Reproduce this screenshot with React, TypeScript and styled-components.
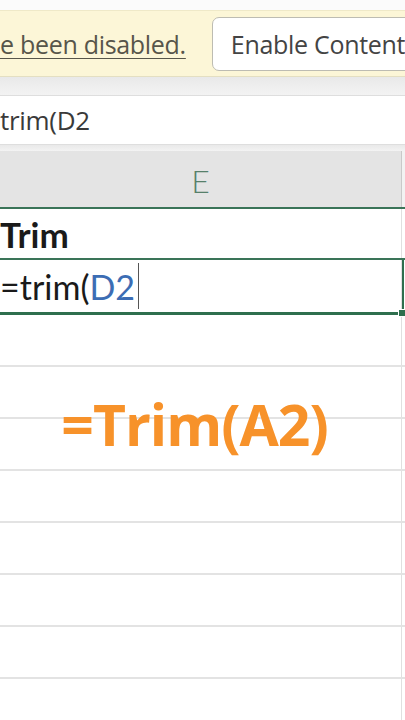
import styled, { createGlobalStyle } from 'styled-components';

const GlobalStyle = createGlobalStyle`
  html, body {
    margin: 0;
    padding: 0;
    background: #ffffff;
    overflow: hidden;
  }
`;

const App = () => {
  const emptyRows = [0, 1, 2, 3, 4, 5, 6, 7];
  return (
    <>
      <GlobalStyle />
      <Page>
        <TopStrip />
        <MessageBar>
          <MessageText>e been disabled.</MessageText>
          <EnableButton>Enable Content</EnableButton>
        </MessageBar>
        <Gap $height={18} />
        <FormulaBar>trim(D2</FormulaBar>
        <Gap $height={6} />
        <ColumnHeader>
          <HeaderCell>E</HeaderCell>
        </ColumnHeader>
        <Row $height={51} $green>
          <Cell $bold>Trim</Cell>
        </Row>
        <ActiveRow>
          <Cell>
            =trim(<Ref>D2</Ref>
            <Caret />
          </Cell>
          <FillHandle />
        </ActiveRow>
        {emptyRows.map((r) => (
          <Row key={r} $height={52}>
            <Cell />
          </Row>
        ))}
        <Caption>=Trim(A2)</Caption>
      </Page>
    </>
  );
};

export default App;

const Page = styled.div`
  position: relative;
  width: 405px;
  height: 720px;
  overflow: hidden;
  display: flex;
  flex-direction: column;
  background: #ffffff;
`;

const TopStrip = styled.div`
  flex: none;
  height: 10px;
  background: #fbfbfb;
`;

const MessageBar = styled.div`
  flex: none;
  height: 67px;
  box-sizing: border-box;
  display: flex;
  align-items: center;
  gap: 26px;
  background: #fcf6d7;
  border-top: 1px solid #efe9c8;
  border-bottom: 1px solid #e4dfc2;
  white-space: nowrap;
`;

const MessageText = styled.span`
  font-family: 'Open Sans', 'Noto Sans', sans-serif;
  font-size: 25px;
  letter-spacing: -0.3px;
  color: #57554a;
  text-decoration: underline;
  text-underline-offset: 4px;
  text-decoration-thickness: 1px;
`;

const EnableButton = styled.div`
  flex: none;
  width: 230px;
  height: 54px;
  box-sizing: border-box;
  display: flex;
  align-items: center;
  padding-left: 18px;
  background: #ffffff;
  border: 1px solid #bdbcb2;
  border-radius: 7px;
  font-family: 'Open Sans', 'Noto Sans', sans-serif;
  font-size: 25px;
  letter-spacing: -0.3px;
  color: #444444;
`;

const Gap = styled.div<{ $height: number }>`
  flex: none;
  height: ${({ $height }) => $height}px;
  background: linear-gradient(#e9e9e9, #f3f3f3);
`;

const FormulaBar = styled.div`
  flex: none;
  height: 50px;
  box-sizing: border-box;
  display: flex;
  align-items: center;
  background: #ffffff;
  border-top: 1px solid #dedede;
  border-bottom: 1px solid #dedede;
  font-family: 'Open Sans', 'Noto Sans', sans-serif;
  font-size: 26px;
  letter-spacing: -0.3px;
  color: #3a3a3a;
`;

const ColumnHeader = styled.div`
  flex: none;
  height: 58px;
  box-sizing: border-box;
  display: flex;
  background: #f2f2f2;
  border-bottom: 2px solid #3a7458;
`;

const HeaderCell = styled.div`
  width: 402px;
  box-sizing: border-box;
  display: flex;
  align-items: center;
  justify-content: center;
  padding-top: 2px;
  background: #e4e4e4;
  border-right: 1px solid #c9c9c9;
  font-family: 'Lato', 'Open Sans', sans-serif;
  font-size: 32px;
  font-weight: 300;
  color: #56806a;
`;

const Row = styled.div<{ $height: number; $green?: boolean }>`
  flex: none;
  height: ${({ $height }) => $height}px;
  box-sizing: border-box;
  display: flex;
  border-bottom: ${({ $green }) => ($green ? '2px solid #3a7458' : '2px solid #e3e3e3')};
`;

const ActiveRow = styled.div`
  position: relative;
  flex: none;
  width: 404px;
  height: 55px;
  box-sizing: border-box;
  display: flex;
  border-right: 2px solid #2f6f4e;
  border-bottom: 3px solid #2f6f4e;
`;

const Cell = styled.div<{ $bold?: boolean }>`
  width: 402px;
  box-sizing: border-box;
  display: flex;
  align-items: center;
  border-right: 1px solid #e0e0e0;
  font-family: 'Lato', 'Open Sans', sans-serif;
  font-size: ${({ $bold }) => ($bold ? 35 : 34)}px;
  font-weight: ${({ $bold }) => ($bold ? 700 : 400)};
  color: #1a1a1a;
  white-space: nowrap;
`;

const Ref = styled.span`
  color: #3c6db4;
`;

const Caret = styled.span`
  display: inline-block;
  width: 1px;
  height: 46px;
  margin-left: 3px;
  background: #555555;
`;

const FillHandle = styled.div`
  position: absolute;
  right: -4px;
  bottom: -5px;
  width: 6px;
  height: 6px;
  background: #2f6f4e;
  border: 1px solid #ffffff;
`;

const Caption = styled.div`
  position: absolute;
  left: 0;
  right: 0;
  top: 385px;
  text-align: center;
  font-family: 'Open Sans', 'Noto Sans', sans-serif;
  font-weight: 700;
  font-size: 57px;
  letter-spacing: -1px;
  color: #f7922a;
  padding-right: 16px;
`;
